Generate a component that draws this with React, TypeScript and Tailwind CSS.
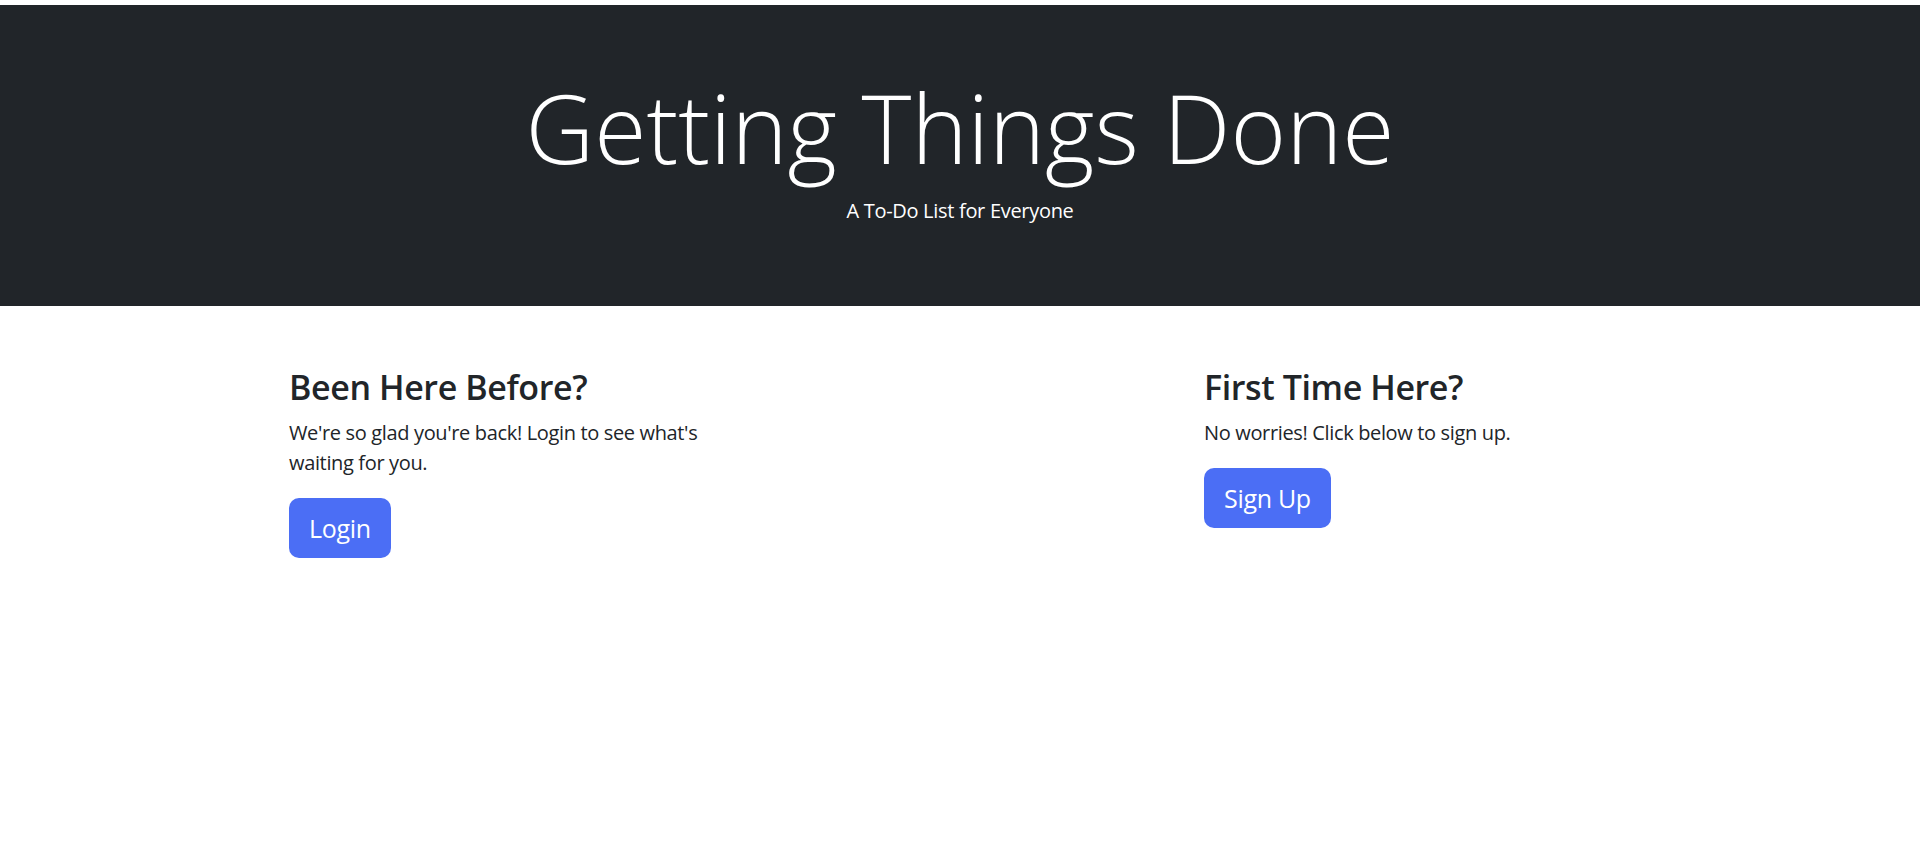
import React from 'react';

const font = "font-['Open_Sans','Noto_Sans',sans-serif]";

interface PanelProps {
  title: string;
  text: string;
  action: string;
  className?: string;
}

const Panel: React.FC<PanelProps> = ({ title, text, action, className = '' }) => (
  <div className={className}>
    <h3 className="text-[34px] leading-[42px] font-semibold tracking-[-0.4px] text-[#212529] mb-[10px]">
      {title}
    </h3>
    <p className="text-[20px] leading-[30px] tracking-[-0.35px] text-[#212529] mb-[20px]">{text}</p>
    <button className="h-[60px] px-5 rounded-[10px] bg-[#4b6ef5] text-white text-[25px] leading-none tracking-[-0.3px]">
      {action}
    </button>
  </div>
);

export default function App() {
  return (
    <div className={`min-h-screen bg-white ${font}`}>
      {/* Header */}
      <header className="mt-[5px] bg-[#212529] text-white text-center pt-[62px] pb-[60px]">
        <h1 className="text-[95px] leading-[120px] font-light mb-[9px]">Getting Things Done</h1>
        <p className="text-[20px] leading-[30px] tracking-[-0.3px] mb-[20px]">A To-Do List for Everyone</p>
      </header>

      {/* Login / Sign up */}
      <section className="mt-[60px] grid grid-cols-[915px_1fr] pl-[289px]">
        <Panel
          className="max-w-[460px]"
          title="Been Here Before?"
          text="We're so glad you're back! Login to see what's waiting for you."
          action="Login"
        />
        <Panel
          title="First Time Here?"
          text="No worries! Click below to sign up."
          action="Sign Up"
        />
      </section>
    </div>
  );
}
